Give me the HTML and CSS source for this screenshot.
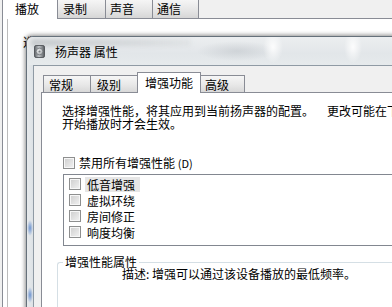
FILE: index.html
```html
<!DOCTYPE html>
<html lang="zh-CN">
<head>
<meta charset="utf-8">
<title>扬声器 属性</title>
<link rel="stylesheet" href="styles.css">
</head>
<body>
<div class="back">
  <div class="back-tabs">
    <div class="btab sel">播放</div>
    <div class="btab w1">录制</div>
    <div class="btab w2">声音</div>
    <div class="btab w3">通信</div>
    <div class="btab-fill"></div>
  </div>
  <div class="back-panel">
    <div class="back-inner">
      <p class="back-text">选择以下播放设备来修改设置:</p>
    </div>
  </div>
</div>

<div class="win">
  <div class="titlebar">
    <span class="smudge" aria-hidden="true"></span>
    <svg class="ico" viewBox="0 0 11 13" width="11" height="13" aria-hidden="true">
      <defs>
        <linearGradient id="spk" x1="0" x2="1" y1="0" y2="0">
          <stop offset="0" stop-color="#5f6367"/>
          <stop offset="0.45" stop-color="#c3c7cb"/>
          <stop offset="1" stop-color="#55595d"/>
        </linearGradient>
        <radialGradient id="cone" cx="0.4" cy="0.4" r="0.7">
          <stop offset="0" stop-color="#f2f3f4"/>
          <stop offset="1" stop-color="#9da1a5"/>
        </radialGradient>
      </defs>
      <rect x="0.5" y="0.5" width="10" height="12" rx="1.6" fill="url(#spk)" stroke="#44484c" stroke-width="0.8"/>
      <circle cx="5.5" cy="6.5" r="3.4" fill="url(#cone)" stroke="#6a6e72" stroke-width="0.7"/>
      <circle cx="5.5" cy="6.5" r="1.1" fill="#7d8185"/>
    </svg>
    <span class="title">扬声器 属性</span>
  </div>
  <div class="win-body">
    <div class="frame-left"></div>
    <div class="client">
      <div class="tabs">
        <div class="tab t1">常规</div>
        <div class="tab t2">级别</div>
        <div class="tab sel">增强功能</div>
        <div class="tab t4">高级</div>
      </div>
      <div class="panel">
        <p class="intro">选择增强性能，将其应用到当前扬声器的配置。<span class="gap"></span>更改可能在下次<br>开始播放时才会生效。</p>
        <div class="chk-row"><span class="cb"></span><span class="chk-label">禁用所有增强性能 <span class="acc">(D)</span></span></div>
        <div class="list">
          <div class="item"><span class="cb"></span><span class="lbl hl">低音增强</span></div>
          <div class="item"><span class="cb"></span><span class="lbl">虚拟环绕</span></div>
          <div class="item"><span class="cb"></span><span class="lbl">房间修正</span></div>
          <div class="item"><span class="cb"></span><span class="lbl">响度均衡</span></div>
        </div>
        <fieldset class="group">
          <legend class="group-title">增强性能属性</legend>
          <p class="desc">描述: 增强可以通过该设备播放的最低频率。</p>
        </fieldset>
      </div>
    </div>
  </div>
</div>
</body>
</html>
```

FILE: styles.css
```css
* {
  box-sizing: border-box;
  margin: 0;
  padding: 0;
}

html,
body {
  width: 392px;
  height: 307px;
  overflow: hidden;
}

body {
  position: relative;
  background: #f0f0f0;
  font-family: "Noto Sans CJK SC", "Microsoft YaHei", sans-serif;
  font-size: 12px;
  color: #000;
}

/* ---------- back window (声音 dialog) ---------- */
.back {
  height: 307px;
  display: flex;
  flex-direction: column;
}

.back-tabs {
  display: flex;
  height: 19px;
  padding-left: 2px;
}

.btab {
  height: 19px;
  line-height: 18px;
  padding-left: 4px;
  border-right: 1px solid #898c95;
  border-bottom: 1px solid #898c95;
  background: linear-gradient(#f5f5f5, #e6e6e6 55%, #d6d6d6);
  white-space: nowrap;
}

.btab.sel {
  width: 56px;
  padding-left: 12px;
  border-left: 1px solid #898c95;
  border-bottom: none;
  background: #fff;
}

.btab.w1 { width: 48px; padding-left: 5px; }
.btab.w2 { width: 47px; padding-left: 4px; }
.btab.w3 { width: 46px; padding-left: 4px; }

.btab-fill {
  flex: 1;
  border-bottom: 1px solid #898c95;
}

.back-panel {
  flex: 1;
  margin-left: 2px;
  border-left: 1px solid #898c95;
  background: #fff;
}

.back-inner {
  height: 100%;
  margin-left: 4px;
  border-left: 1px solid #bcbcbc;
  padding: 17px 0 0 15px;
}

.back-text {
  line-height: 12px;
  white-space: nowrap;
}

/* ---------- front window (扬声器 属性) ---------- */
.win {
  position: absolute;
  left: 26px;
  top: 36px;
  width: 420px;
  height: 300px;
  display: flex;
  flex-direction: column;
  border: 1px solid #66717b;
  border-radius: 7px 0 0 0;
  box-shadow: -1px -1px 4px rgba(0, 0, 0, 0.45);
  background: #e3e7ea;
  overflow: hidden;
}

.titlebar {
  position: relative;
  height: 28px;
  flex: none;
  display: flex;
  align-items: center;
  padding: 2px 0 0 7px;
  background:
    radial-gradient(ellipse 10px 16px at 246px 10px, rgba(255, 255, 255, 0.9), rgba(255, 255, 255, 0)),
    radial-gradient(ellipse 9px 16px at 326px 10px, rgba(255, 255, 255, 0.9), rgba(255, 255, 255, 0)),
    radial-gradient(ellipse 40px 10px at 210px 14px, rgba(170, 176, 182, 0.35), rgba(170, 176, 182, 0)),
    linear-gradient(#eceef0, #e2e6e9 60%, #e6eaec);
}

.smudge {
  position: absolute;
  left: 4px;
  top: 2px;
  width: 160px;
  height: 7px;
  background: linear-gradient(90deg, rgba(150, 155, 160, 0.45), rgba(150, 155, 160, 0.25) 60%, rgba(150, 155, 160, 0.1));
  filter: blur(2.5px);
}

.ico {
  position: relative;
  flex: none;
  margin-top: -1px;
}

.title {
  position: relative;
  margin-left: 10px;
  line-height: 14px;
  white-space: nowrap;
}

.win-body {
  flex: 1;
  display: flex;
}

.frame-left {
  width: 6px;
  flex: none;
  background:
    radial-gradient(ellipse 3px 8px at 3px 163px, rgba(70, 120, 200, 0.75), rgba(70, 120, 200, 0)),
    radial-gradient(ellipse 3px 8px at 3px 230px, rgba(70, 120, 200, 0.75), rgba(70, 120, 200, 0)),
    linear-gradient(90deg, #e7eaec, #dde2e6);
}

.client {
  flex: 1;
  display: flex;
  flex-direction: column;
  padding: 6px 0 0 7px;
  background: #f0f0f0;
  border-left: 1px solid #8f9aa4;
  border-top: 1px solid #8f9aa4;
}

.tabs {
  position: relative;
  z-index: 1;
  display: flex;
  align-items: flex-end;
  height: 20px;
  padding-left: 2px;
}

.tab {
  height: 17px;
  line-height: 17px;
  margin-left: -1px;
  padding-left: 5px;
  border: 1px solid #898c95;
  border-bottom: none;
  background: linear-gradient(#f6f6f6, #e8e8e8 55%, #d8d8d8);
  white-space: nowrap;
}

.tab.t1 { width: 48px; margin-left: 0; }
.tab.t2 { width: 48px; padding-left: 6px; }
.tab.t4 { width: 45px; padding-left: 4px; }

.tab.sel {
  width: 64px;
  height: 21px;
  line-height: 19px;
  margin-bottom: -1px;
  padding-left: 7px;
  background: #fff;
}

.panel {
  flex: 1;
  background: #fff;
  border-top: 1px solid #898c95;
  border-left: 1px solid #898c95;
  padding-top: 11px;
}

.intro {
  margin-left: 20px;
  line-height: 13px;
  white-space: nowrap;
}

.gap {
  display: inline-block;
  width: 13px;
}

.cb {
  display: inline-block;
  flex: none;
  width: 12px;
  height: 12px;
  border: 1px solid #8e8f8f;
  background: linear-gradient(135deg, #cdcdcd, #f3f3f3);
  box-shadow: inset 0 0 0 1px #f7f7f7;
}

.chk-row {
  display: flex;
  align-items: center;
  height: 14px;
  margin: 26px 0 0 21px;
  white-space: nowrap;
}

.chk-label {
  margin-left: 4px;
  line-height: 14px;
}

.acc {
  font-size: 11px;
}

.list {
  height: 72px;
  margin: 4px 0 0 21px;
  padding: 1px 0 0 5px;
  border: 1px solid #828790;
  border-right: none;
}

.item {
  display: flex;
  align-items: center;
  height: 16px;
}

.lbl {
  margin-left: 4px;
  padding: 0 5px 0 2px;
  line-height: 15px;
  white-space: nowrap;
}

.lbl.hl {
  background: #e6e6e6;
}

.group {
  height: 70px;
  margin: 10px 0 0 15px;
  padding: 0 0 0 5px;
  border: 1px solid #d5dfe5;
  border-right: none;
  border-radius: 3px 0 0 0;
}

.group-title {
  padding: 0 2px;
  line-height: 12px;
}

.desc {
  margin-left: 59px;
  line-height: 12px;
  white-space: nowrap;
}
```
